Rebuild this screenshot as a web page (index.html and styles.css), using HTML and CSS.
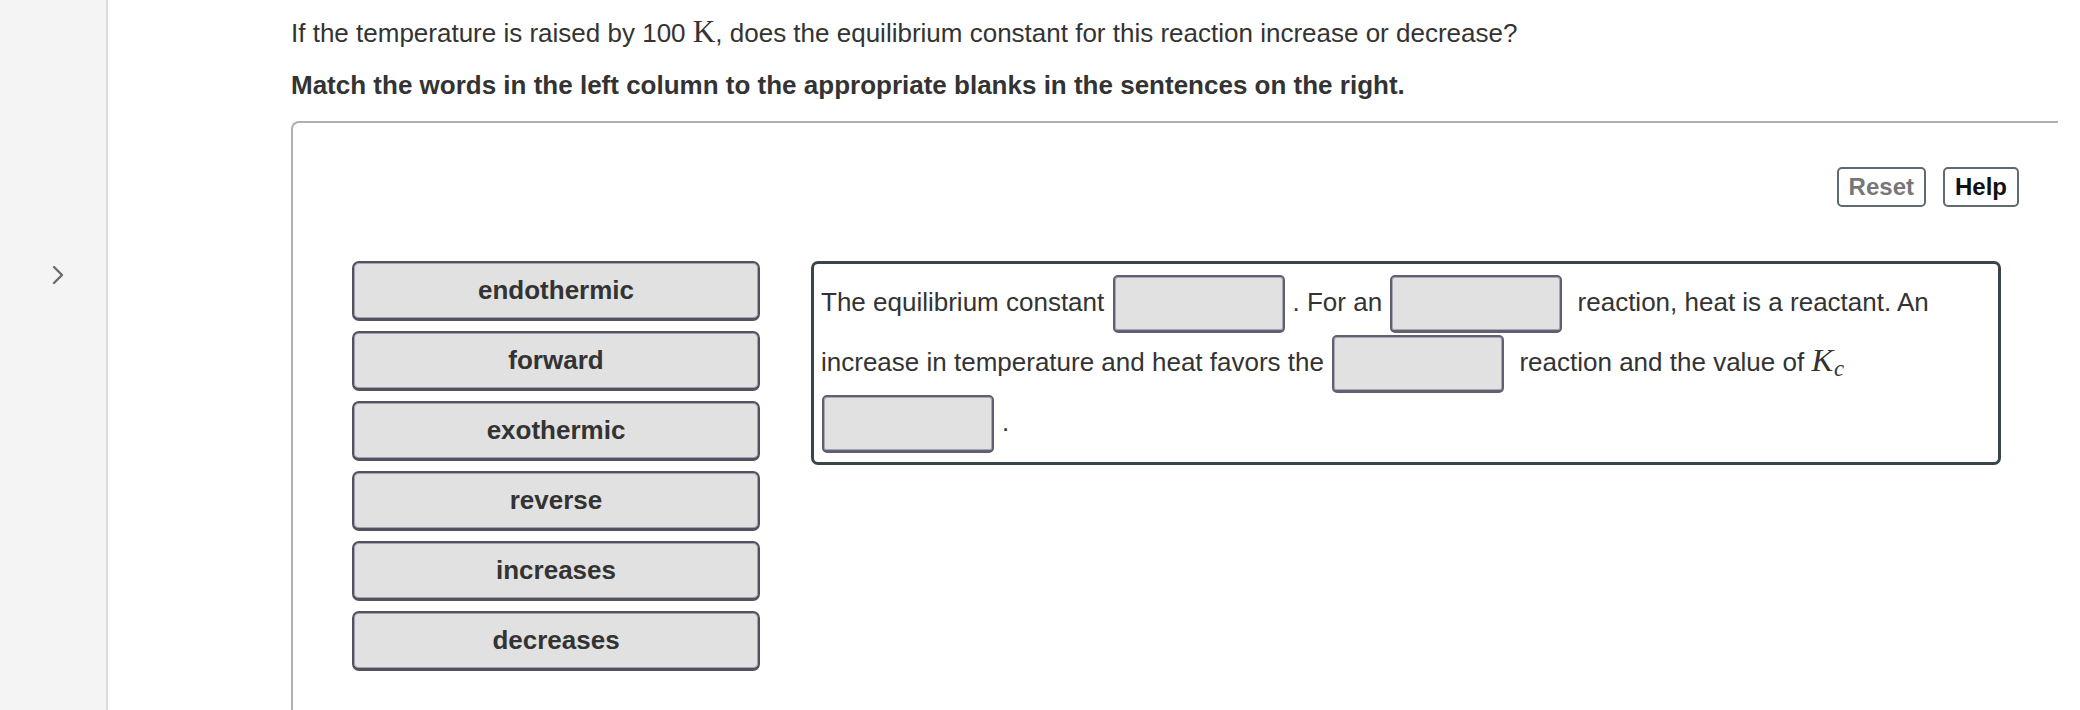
FILE: index.html
```
<!DOCTYPE html>
<html lang="en">
<head>
    <meta charset="UTF-8">
    <meta name="viewport" content="width=device-width, initial-scale=1.0">
    <title>Equilibrium Constant - Matching</title>
    <link rel="stylesheet" href="styles.css">
</head>
<body>
    <!-- Collapsed side panel -->
    <aside class="sidebar">
        <span class="chevron">
            <svg width="14" height="22" viewBox="0 0 14 22">
                <polyline points="3,3 11,11 3,19" fill="none" stroke="#6b6b6b" stroke-width="2.4" stroke-linecap="round" stroke-linejoin="round"/>
            </svg>
        </span>
    </aside>

    <main class="content">
        <p class="question">If the temperature is raised by 100 <span class="math-rm">K</span>, does the equilibrium constant for this reaction increase or decrease?</p>
        <p class="instructions">Match the words in the left column to the appropriate blanks in the sentences on the right.</p>

        <!-- Drag and drop activity -->
        <div class="activity">
            <div class="toolbar">
                <button class="btn btn-reset">Reset</button>
                <button class="btn btn-help">Help</button>
            </div>

            <div class="workspace">
                <ul class="word-bank">
                    <li class="word">endothermic</li>
                    <li class="word">forward</li>
                    <li class="word">exothermic</li>
                    <li class="word">reverse</li>
                    <li class="word">increases</li>
                    <li class="word">decreases</li>
                </ul>

                <div class="sentences">
                    <span>The equilibrium constant</span>
                    <span class="blank"></span><span>. For an</span>
                    <span class="blank"></span>
                    <span>reaction, heat is a reactant. An</span>
                    <span>increase in temperature and heat favors the</span>
                    <span class="blank"></span>
                    <span>reaction and the value of <span class="math-it">K<sub>c</sub></span></span>
                    <span class="blank"></span><span>.</span>
                </div>
            </div>
        </div>
    </main>
</body>
</html>
```
FILE: styles.css
```
/* Base Styles */
html, body {
    margin: 0;
    padding: 0;
}

body {
    display: flex;
    min-height: 100vh;
    font-family: 'Liberation Sans', Arial, sans-serif;
    color: #333;
    background: #fff;
    overflow: hidden;
}

/* Sidebar */
.sidebar {
    width: 108px;
    flex-shrink: 0;
    background: #f4f4f4;
    border-right: 2px solid #dcdcdc;
    display: flex;
    justify-content: center;
    align-items: flex-start;
    padding-top: 264px;
    box-sizing: border-box;
}

.chevron {
    display: block;
    margin-left: 10px;
}

/* Main content */
.content {
    flex: 1;
    padding: 18px 22px 0 183px;
}

.question,
.instructions {
    margin: 0;
    font-size: 26px;
    line-height: 30px;
}

.instructions {
    margin-top: 22px;
    font-weight: bold;
}

.math-rm {
    font-family: 'Liberation Serif', 'Times New Roman', serif;
    font-size: 1.2em;
    line-height: 0;
}

.math-it {
    font-family: 'Liberation Serif', 'Times New Roman', serif;
    font-style: italic;
    font-size: 1.25em;
    line-height: 0;
}

.math-it sub {
    font-size: 0.7em;
    vertical-align: -0.2em;
    margin-left: 1px;
}

/* Activity box */
.activity {
    margin-top: 21px;
    border: 2px solid #b0b0b0;
    border-right: none;
    border-bottom: none;
    border-top-left-radius: 8px;
    padding-bottom: 80px;
}

.toolbar {
    display: flex;
    justify-content: flex-end;
    gap: 17px;
    padding: 44px 39px 0 0;
}

.btn {
    font-family: 'Liberation Sans', Arial, sans-serif;
    font-size: 24px;
    font-weight: bold;
    line-height: 36px;
    height: 40px;
    padding: 0 10px;
    background: #fff;
    border: 2px solid #5f6b6e;
    border-radius: 5px;
    cursor: pointer;
}

.btn-reset {
    color: #777;
}

.btn-help {
    color: #111;
}

/* Words and sentences */
.workspace {
    display: flex;
    align-items: flex-start;
    gap: 51px;
    padding: 54px 57px 0 59px;
}

.word-bank {
    list-style: none;
    margin: 0;
    padding: 0;
    width: 408px;
    flex-shrink: 0;
    display: flex;
    flex-direction: column;
    gap: 10px;
}

.word {
    height: 60px;
    box-sizing: border-box;
    display: flex;
    align-items: center;
    justify-content: center;
    background: #e1e1e1;
    border: 2px solid #52525f;
    border-bottom-width: 3px;
    border-radius: 7px;
    box-shadow: inset 0 0 0 1px #a2a2b0;
    font-size: 26px;
    font-weight: bold;
    color: #333;
    cursor: grab;
}

.sentences {
    flex: 1;
    min-height: 202px;
    box-sizing: border-box;
    border: 3px solid #394548;
    border-radius: 7px;
    padding: 9px 7px;
    font-size: 26px;
    line-height: 59px;
}

.blank {
    display: inline-block;
    width: 172px;
    height: 58px;
    box-sizing: border-box;
    margin: 0 8px 0 1px;
    vertical-align: middle;
    background: #e1e1e1;
    border: 2px solid #606072;
    border-bottom-width: 3px;
    border-radius: 5px;
    box-shadow: inset 0 0 0 1px #a8a8b4;
}
```
